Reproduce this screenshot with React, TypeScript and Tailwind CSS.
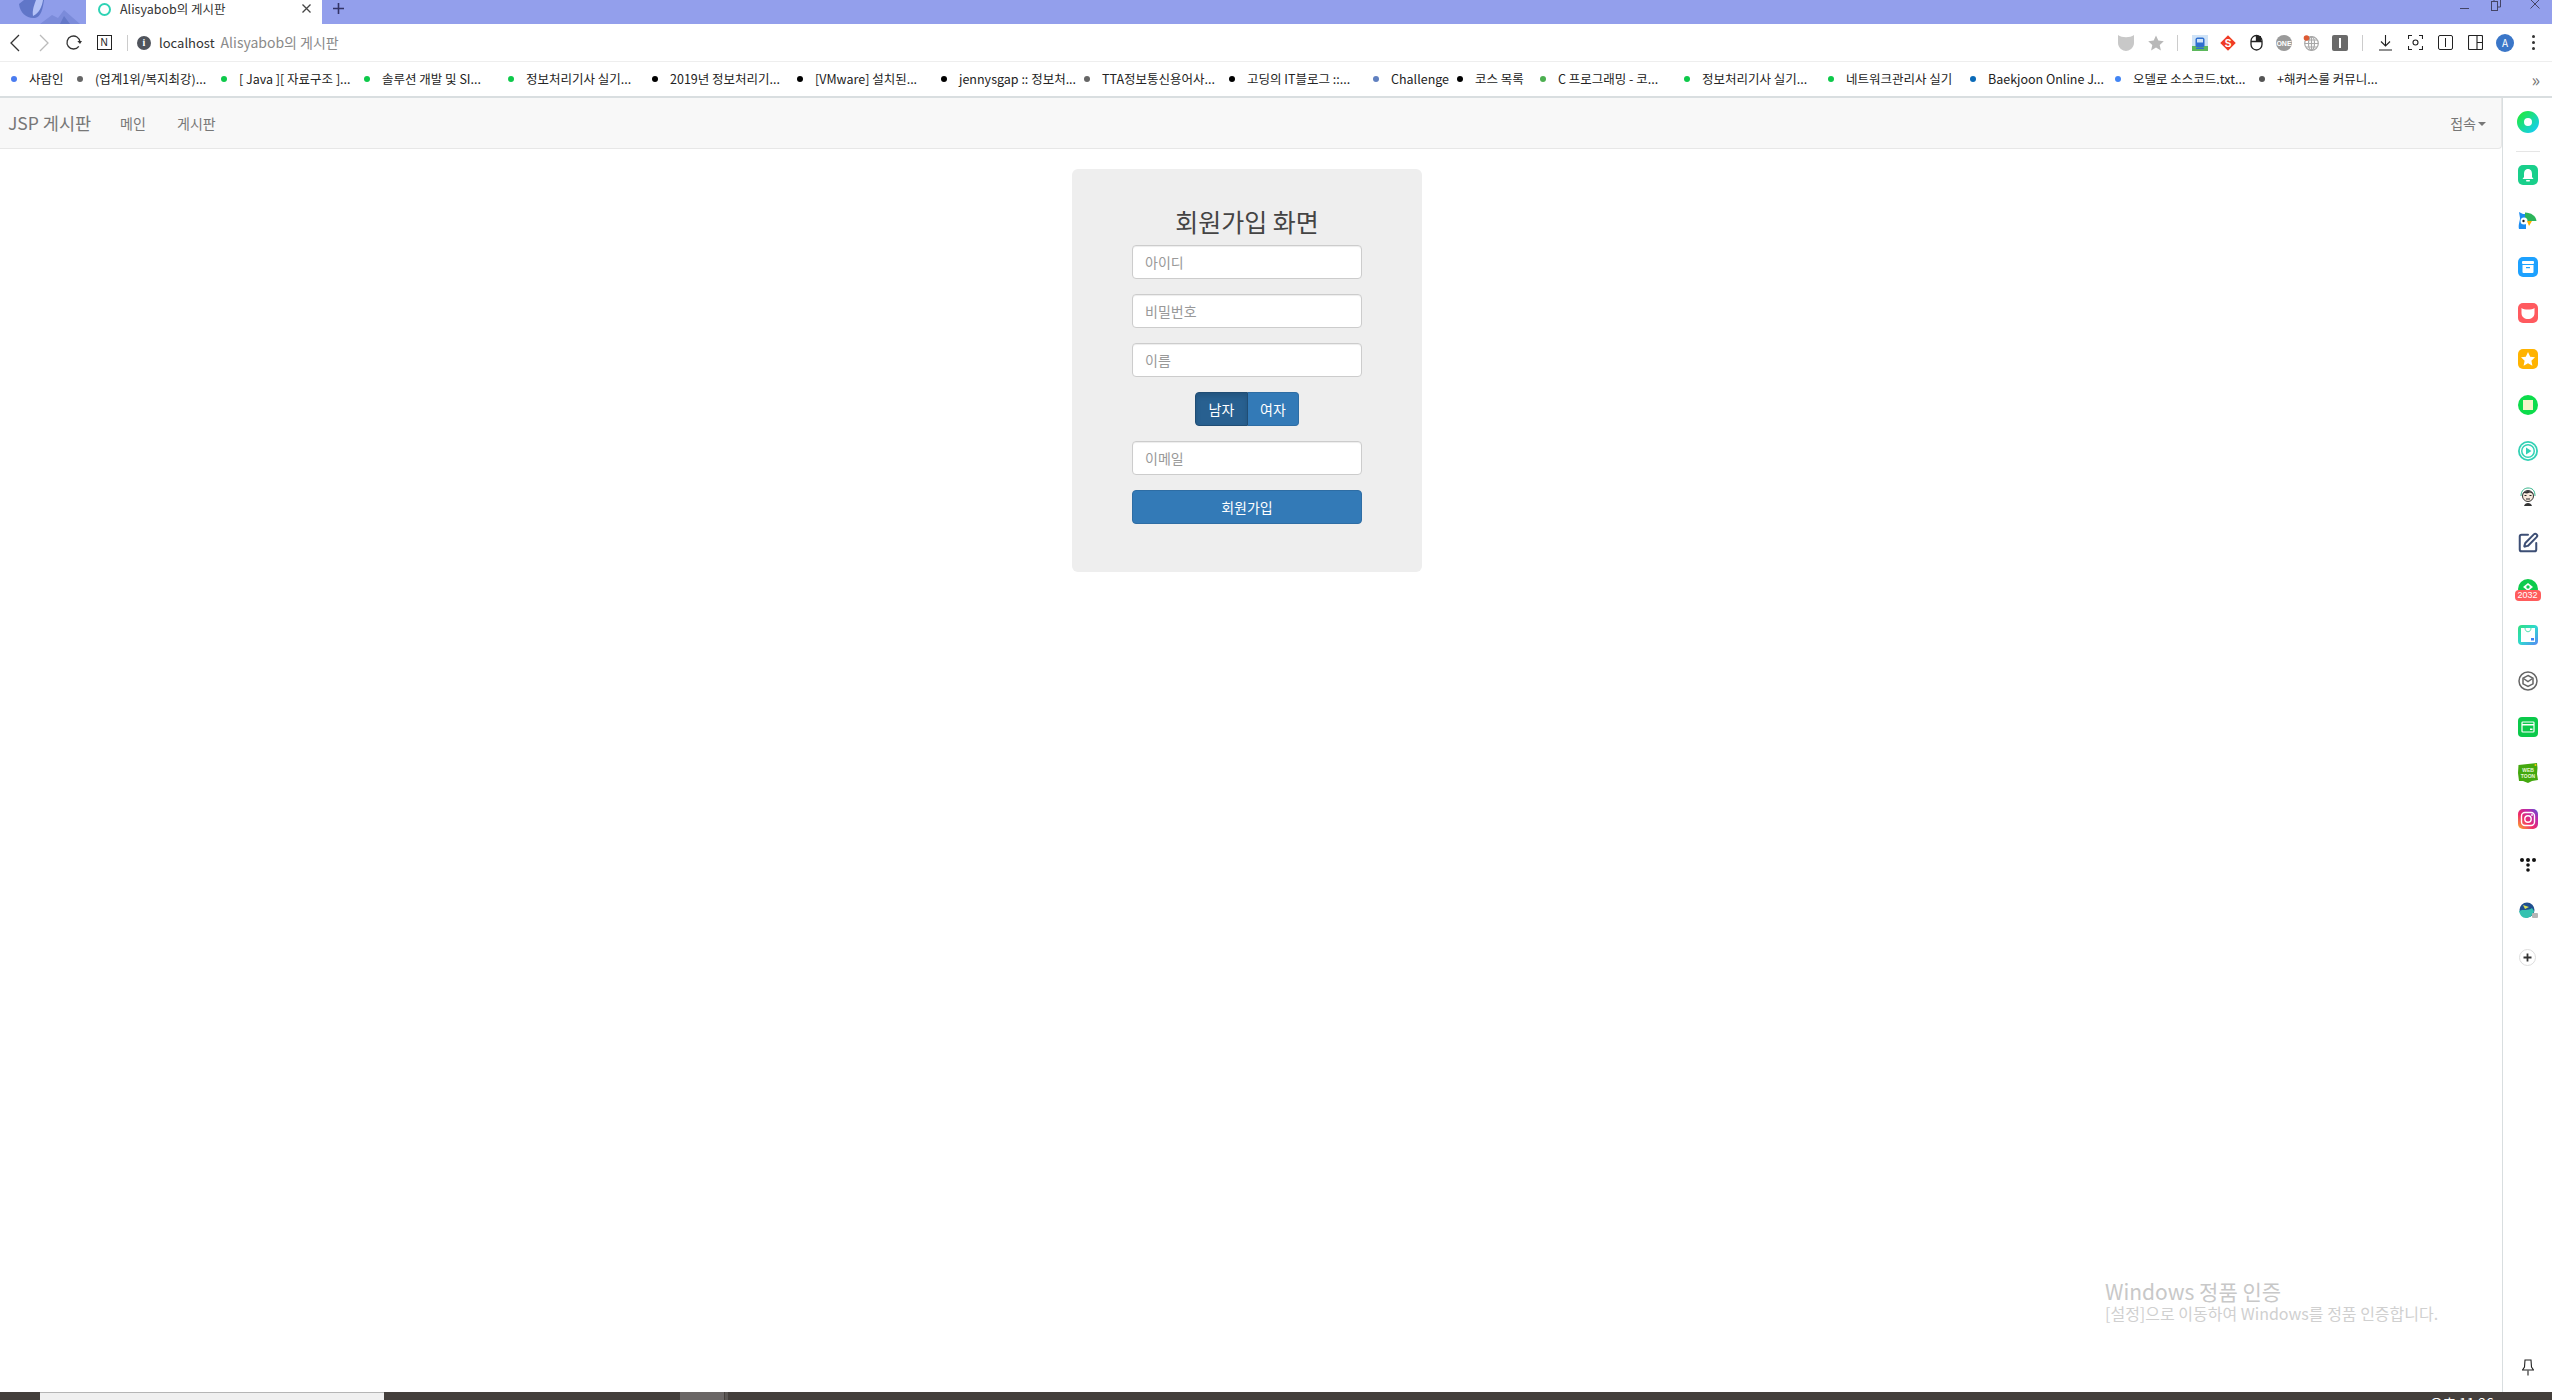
import { SquarePen } from 'lucide-react';

const bookmarks = [
  { label: '사람인', dot: 'bg-[#4a7cf0]', width: 'w-[66px]' },
  { label: '(업계1위/복지최강)...', dot: 'bg-[#666666]', width: 'w-[144px]' },
  { label: '[ Java ][ 자료구조 ]...', dot: 'bg-[#0dc94a]', width: 'w-[143px]' },
  { label: '솔루션 개발 및 SI...', dot: 'bg-[#0dc94a]', width: 'w-[144px]' },
  { label: '정보처리기사 실기...', dot: 'bg-[#0dc94a]', width: 'w-[144px]' },
  { label: '2019년 정보처리기...', dot: 'bg-black', width: 'w-[145px]' },
  { label: '[VMware] 설치된...', dot: 'bg-black', width: 'w-[144px]' },
  { label: 'jennysgap :: 정보처...', dot: 'bg-black', width: 'w-[143px]' },
  { label: 'TTA정보통신용어사...', dot: 'bg-[#666666]', width: 'w-[145px]' },
  { label: '고딩의 IT블로그 ::...', dot: 'bg-black', width: 'w-[144px]' },
  { label: 'Challenge', dot: 'bg-[#6080c0]', width: 'w-[84px]' },
  { label: '코스 목록', dot: 'bg-black', width: 'w-[83px]' },
  { label: 'C 프로그래밍 - 코...', dot: 'bg-[#4caf50]', width: 'w-[144px]' },
  { label: '정보처리기사 실기...', dot: 'bg-[#0dc94a]', width: 'w-[144px]' },
  { label: '네트워크관리사 실기', dot: 'bg-[#0dc94a]', width: 'w-[142px]' },
  { label: 'Baekjoon Online J...', dot: 'bg-[#0a6ab8]', width: 'w-[145px]' },
  { label: '오델로 소스코드.txt...', dot: 'bg-[#4285f4]', width: 'w-[144px]' },
  { label: '+해커스룰 커뮤니...', dot: 'bg-[#555555]', width: 'w-[144px]' },
];

function TabArt() {
  return (
    <svg width="86" height="24" viewBox="0 0 86 24" className="shrink-0">
      <rect width="86" height="24" fill="#8f9dea" />
      <path d="M40 24 L52 15 L58 18 L64 10 L80 24 Z" fill="#7b8bda" />
      <path d="M60 24 L64 16 L70 24 Z" fill="#6478c8" />
      <path d="M19 4 C20 13 27 19 35 18 C41 17 43 8 44 0 L24 0 Z" fill="#6076c8" />
      <path d="M33 16 C39 13 42 7 43 0 L36 0 C34 5 32 11 33 16 Z" fill="#b4c2f6" />
    </svg>
  );
}

function SidebarIcons() {
  return (
    <>
      <div className="h-[46px] flex items-center justify-center">
        <svg width="20" height="20" viewBox="0 0 20 20">
          <rect width="20" height="20" rx="5" fill="#19cf8b" />
          <path d="M10 4 C7 4 6 6.500 6 9 L6 12 L4.500 14 L15.500 14 L14 12 L14 9 C14 6.500 13 4 10 4 Z" fill="#fff" />
          <rect x="8" y="15" width="4" height="1.500" rx="0.700" fill="#fff" />
        </svg>
      </div>
      <div className="h-[46px] flex items-center justify-center">
        <svg width="20" height="20" viewBox="0 0 20 20">
          <path d="M1 1 L5 3 L8 3 L8 18 L1 18 C0 14 2 10 2 7 Z" fill="#1b8cf2" />
          <path d="M7 1.500 C13 1.500 18 5 18.500 10 L9 10 L7 6 Z" fill="#2bb45a" />
          <circle cx="6" cy="10" r="3.500" fill="#fff" />
          <circle cx="5.500" cy="10" r="1.200" fill="#222" />
          <path d="M9 10 L14 10 L11 15 Z" fill="#ffb300" />
        </svg>
      </div>
      <div className="h-[46px] flex items-center justify-center">
        <svg width="20" height="20" viewBox="0 0 20 20">
          <rect width="20" height="20" rx="5" fill="#1da1ff" />
          <rect x="4" y="4" width="12" height="3" rx="1" fill="#fff" />
          <path d="M4.500 8 H15.500 V15 A1 1 0 0 1 14.500 16 H5.500 A1 1 0 0 1 4.500 15 Z" fill="#fff" />
          <rect x="8" y="10" width="4" height="1.200" fill="#1da1ff" />
        </svg>
      </div>
      <div className="h-[46px] flex items-center justify-center">
        <svg width="20" height="20" viewBox="0 0 20 20">
          <rect width="20" height="20" rx="5" fill="#ff5a5f" />
          <path d="M3.500 5 C6 7 14 7 16.500 5 L16.500 10 C16.500 18 3.500 18 3.500 10 Z" fill="#fff" />
        </svg>
      </div>
      <div className="h-[46px] flex items-center justify-center">
        <svg width="20" height="20" viewBox="0 0 20 20">
          <rect width="20" height="20" rx="5" fill="#ffb300" />
          <path d="M10 3 L12.200 7.700 L17 8.300 L13.400 11.700 L14.400 16.700 L10 14.200 L5.600 16.700 L6.600 11.700 L3 8.300 L7.800 7.700 Z" fill="#fff" />
        </svg>
      </div>
      <div className="h-[46px] flex items-center justify-center">
        <svg width="20" height="20" viewBox="0 0 20 20">
          <circle cx="10" cy="10" r="10" fill="#0ddc4b" />
          <rect x="5" y="5" width="10" height="10" fill="#f4f4c8" />
        </svg>
      </div>
      <div className="h-[46px] flex items-center justify-center">
        <svg width="20" height="20" viewBox="0 0 20 20">
          <circle cx="10" cy="10" r="10" fill="#32d1b4" />
          <circle cx="10" cy="10" r="8.200" fill="#fff" />
          <circle cx="10" cy="10" r="7" fill="#32d1b4" />
          <circle cx="10" cy="10" r="5.500" fill="#fff" />
          <path d="M8 6.500 L13.500 10 L8 13.500 Z" fill="#32d1b4" />
        </svg>
      </div>
      <div className="h-[46px] flex items-center justify-center">
        <svg width="18" height="20" viewBox="0 0 18 20">
          <path d="M2 9 C2 3 6 1 9 1 C13 1 16 3 16 9" fill="none" stroke="#37b58c" strokeWidth="1" />
          <circle cx="9" cy="9" r="5.500" fill="#f7e9dc" stroke="#333" strokeWidth="1" />
          <path d="M3.500 7 C5 3 13 3 14.500 7 L11 5.500 L8 6.500 L5 6 Z" fill="#333" />
          <rect x="5.500" y="8" width="2" height="1" fill="#222" />
          <rect x="10.500" y="8" width="2" height="1" fill="#222" />
          <path d="M7 12 H11" stroke="#222" strokeWidth="1" />
          <path d="M5 19 C6 15 12 15 13 19 Z" fill="#333" />
        </svg>
      </div>
      <div className="h-[46px] flex items-center justify-center">
        <SquarePen size={22} strokeWidth={2.200} color="#3d4f75" />
      </div>
      <div className="h-[46px] flex items-center justify-center">
        <div className="relative w-[26px] h-[24px] mt-1 flex justify-center">
          <svg width="20" height="18" viewBox="0 0 20 18">
            <circle cx="10" cy="10" r="10" fill="#0dcb4c" />
            <path d="M10 4 L15 8 L10 12 L5 8 Z" fill="#fff" />
            <circle cx="10" cy="8" r="1.700" fill="#0dcb4c" />
          </svg>
          <span className="absolute left-0 top-[11px] w-[26px] h-[11px] rounded-[4px] bg-[#ff5c5c] text-white text-[9px] leading-[11px] text-center font-['Liberation_Sans',sans-serif]">2032</span>
        </div>
      </div>
      <div className="h-[46px] flex items-center justify-center">
        <svg width="20" height="20" viewBox="0 0 20 20">
          <defs>
            <linearGradient id="bagBg" x1="0" y1="0" x2="1" y2="1">
              <stop offset="0" stopColor="#2fe07c" />
              <stop offset="0.500" stopColor="#2fd8d0" />
              <stop offset="1" stopColor="#5a86f5" />
            </linearGradient>
          </defs>
          <rect width="20" height="20" rx="4" fill="url(#bagBg)" />
          <rect x="3" y="3" width="14" height="14" fill="#fff" />
          <path d="M7 3 C7 8 13 8 13 3" fill="none" stroke="#2fd8a0" strokeWidth="0.800" />
          <rect x="13" y="13" width="3" height="2.500" fill="#3b82f6" />
        </svg>
      </div>
      <div className="h-[46px] flex items-center justify-center">
        <svg width="20" height="20" viewBox="0 0 20 20" fill="none" stroke="#666" strokeWidth="1.500">
          <circle cx="10" cy="10" r="9" />
          <path d="M10 4.500 L15 7.200 L15 12.800 L10 15.500 L5 12.800 L5 7.200 Z" />
          <path d="M5.500 7.500 L10 10.500 L14.500 7.500" />
        </svg>
      </div>
      <div className="h-[46px] flex items-center justify-center">
        <svg width="20" height="20" viewBox="0 0 20 20">
          <rect width="20" height="20" rx="4" fill="#0ac94a" />
          <rect x="4" y="5" width="12" height="10" rx="0.800" fill="none" stroke="#fff" strokeWidth="1.200" />
          <rect x="4" y="7" width="12" height="1.500" fill="#fff" />
          <rect x="12" y="11.500" width="2.500" height="1.500" fill="#fff" />
        </svg>
      </div>
      <div className="h-[46px] flex items-center justify-center">
        <svg width="20" height="20" viewBox="0 0 20 20">
          <path d="M0.500 2 L19 0 L19.500 5 L19 11 L20 17 L14 18 L10 20 L5 18 L1 18 L0 10 Z" fill="#43a80e" />
          <circle cx="17.500" cy="2" r="1" fill="#ffc400" />
          <text x="10" y="9" textAnchor="middle" fontSize="5" fontWeight="700" fill="#e9f7dc" fontFamily="Liberation Sans, sans-serif">WEB</text>
          <text x="10" y="15" textAnchor="middle" fontSize="5" fontWeight="700" fill="#e9f7dc" fontFamily="Liberation Sans, sans-serif">TOON</text>
        </svg>
      </div>
      <div className="h-[46px] flex items-center justify-center">
        <svg width="20" height="20" viewBox="0 0 20 20">
          <defs>
            <linearGradient id="instaBg" x1="0" y1="1" x2="1" y2="0">
              <stop offset="0" stopColor="#fdb22c" />
              <stop offset="0.400" stopColor="#ee2a6b" />
              <stop offset="0.750" stopColor="#b42bb0" />
              <stop offset="1" stopColor="#4f5bd5" />
            </linearGradient>
          </defs>
          <rect width="20" height="20" rx="5" fill="url(#instaBg)" />
          <rect x="3.500" y="3.500" width="13" height="13" rx="3.500" fill="none" stroke="#fff" strokeWidth="1.400" />
          <circle cx="10" cy="10" r="3.200" fill="none" stroke="#fff" strokeWidth="1.400" />
          <circle cx="14" cy="6" r="0.900" fill="#fff" />
        </svg>
      </div>
      <div className="h-[46px] flex items-center justify-center">
        <svg width="16" height="14" viewBox="0 0 16 14" fill="#111">
          <circle cx="2" cy="2" r="2" />
          <circle cx="8" cy="2" r="2" />
          <circle cx="14" cy="2" r="2" />
          <circle cx="8" cy="7" r="1.800" />
          <circle cx="8" cy="12" r="1.800" />
        </svg>
      </div>
      <div className="h-[46px] flex items-center justify-center">
        <svg width="20" height="18" viewBox="0 0 20 18">
          <circle cx="9" cy="8" r="7.500" fill="#1f4f8f" />
          <path d="M1 9 C5 7 10 9 14 6 L16 9 C15 14 11 16 8 16 C4 16 2 13 1 9 Z" fill="#35c2b0" />
          <path d="M5 3 L11 5 L7 7 Z" fill="#d8e25a" />
          <rect x="14" y="11" width="6" height="5" rx="1" fill="#b5b5b5" />
        </svg>
      </div>
      <div className="h-[46px] flex items-center justify-center">
        <div className="w-[17px] h-[17px] rounded-full border border-[#dddddd] flex items-center justify-center">
          <svg width="9" height="9" viewBox="0 0 9 9">
            <path d="M4.500 0.500 V8.500 M0.500 4.500 H8.500" stroke="#333" strokeWidth="1.800" />
          </svg>
        </div>
      </div>
    </>
  );
}

export default function App() {
  return (
    <div className="h-screen w-full overflow-hidden bg-white flex flex-col font-['Noto_Sans_CJK_KR',sans-serif] text-black">
      {/* Tab strip */}
      <div className="h-6 shrink-0 bg-[#939fec] flex items-stretch">
        <TabArt />
        <div className="w-[236px] bg-white flex items-center pl-3 pb-[6px] relative">
          <span className="w-[13px] h-[13px] rounded-full border-2 border-[#2fd3b5]"></span>
          <span className="ml-[9px] text-[12.500px] leading-[18px] text-[#333333]">Alisyabob의 게시판</span>
          <svg width="9" height="9" viewBox="0 0 9 9" stroke="#444444" strokeWidth="1.300" className="absolute left-[216px] top-[4px]">
            <path d="M0.500 0.500 L8.500 8.500 M8.500 0.500 L0.500 8.500" />
          </svg>
        </div>
        <svg width="11" height="11" viewBox="0 0 11 11" stroke="#333366" strokeWidth="1.600" className="ml-[11px] mt-[3px]">
          <path d="M5.500 0 V11 M0 5.500 H11" />
        </svg>
        <div className="ml-auto flex items-center pr-[12px]">
          <span className="w-[9px] h-px bg-[#444466] -mt-2"></span>
          <svg width="12" height="14" viewBox="0 0 12 14" fill="none" stroke="#444466" className="ml-[21px] -mt-4">
            <rect x="1.500" y="4.500" width="6" height="9" />
            <path d="M4 4 V1.500 H10.500 V10 H8" />
          </svg>
          <svg width="10" height="10" viewBox="0 0 10 10" stroke="#444466" className="ml-[28px] -mt-4">
            <path d="M0.500 0.500 L9.500 9.500 M9.500 0.500 L0.500 9.500" />
          </svg>
        </div>
      </div>

      {/* Address bar */}
      <div className="h-[38px] shrink-0 bg-white border-b border-[#eeeeee] flex items-center">
        <div className="w-[29px] flex justify-center">
          <svg width="12" height="18" viewBox="0 0 12 18" fill="none" stroke="#333" strokeWidth="1.300"><path d="M10 1 L2 9 L10 17" /></svg>
        </div>
        <div className="w-[30px] flex justify-center">
          <svg width="12" height="18" viewBox="0 0 12 18" fill="none" stroke="#bbbbbb" strokeWidth="1.300"><path d="M2 1 L10 9 L2 17" /></svg>
        </div>
        <div className="w-[29px] flex justify-center">
          <svg width="17" height="17" viewBox="0 0 17 17" fill="none" stroke="#333" strokeWidth="1.300">
            <path d="M13.800 12.300 A6.500 6.500 0 1 1 15 8" />
            <path d="M12.300 7 L17 7 L15 10 Z" fill="#333" stroke="none" />
          </svg>
        </div>
        <div className="w-[32px] flex justify-center">
          <span className="w-[15px] h-[15px] border border-[#222222] text-[10px] leading-[13px] text-center text-[#222222] font-['Liberation_Sans',sans-serif]">N</span>
        </div>
        <div className="w-[14px] flex justify-center"><span className="w-px h-[16px] bg-[#cccccc]"></span></div>
        <div className="w-[20px] flex justify-center">
          <span className="w-[14px] h-[14px] rounded-full bg-[#50545c] text-white text-[10px] leading-[14px] text-center font-bold font-['Liberation_Serif',serif]">i</span>
        </div>
        <span className="ml-[5px] text-[13px] text-[#333333]">localhost</span>
        <span className="ml-[6px] text-[14px] text-[#8a8a8a]">Alisyabob의 게시판</span>

        <div className="ml-auto flex items-center pr-[5px]">
          <div className="w-[30px] flex justify-center">
            <svg width="16" height="16" viewBox="0 0 16 16"><path d="M0 0 C4 3 12 3 16 0 L16 8 C16 13 11 16 8 16 C5 16 0 13 0 8 Z" fill="#c8c8c8" /></svg>
          </div>
          <div className="w-[30px] flex justify-center">
            <svg width="16" height="16" viewBox="0 0 16 16"><path d="M8 0.500 L10.300 5.600 L15.800 6.200 L11.700 9.900 L12.900 15.400 L8 12.600 L3.100 15.400 L4.300 9.900 L0.200 6.200 L5.700 5.600 Z" fill="#b8b8b8" /></svg>
          </div>
          <div className="w-[12px] flex justify-center"><span className="w-px h-[16px] bg-[#cccccc]"></span></div>
          <div className="w-[34px] flex justify-center">
            <svg width="16" height="16" viewBox="0 0 16 16">
              <rect width="16" height="16" fill="#cfe3f7" />
              <rect y="11" width="16" height="5" fill="#5cb85c" />
              <rect x="3.500" y="2.500" width="9" height="10" rx="2" fill="#2f6fd0" />
              <rect x="5" y="4" width="6" height="3.500" fill="#cfe3f7" />
              <rect x="4" y="13" width="8" height="1" fill="#2f6fd0" />
            </svg>
          </div>
          <div className="w-[22px] flex justify-center">
            <svg width="16" height="16" viewBox="0 0 16 16">
              <rect x="2.500" y="2.500" width="11" height="11" transform="rotate(45 8 8)" fill="#f03a24" />
              <text x="8" y="11.500" textAnchor="middle" fontSize="10" fontWeight="700" fill="#fff" fontFamily="Liberation Sans, sans-serif">S</text>
            </svg>
          </div>
          <div className="w-[34px] flex justify-center">
            <svg width="13" height="17" viewBox="0 0 13 17" fill="none" stroke="#222" strokeWidth="1.300">
              <rect x="1" y="1.500" width="11" height="14.500" rx="5.500" />
              <path d="M1 7.500 H12 M6.500 1.500 V7.500" />
              <rect x="6.500" y="2" width="4.500" height="5.500" fill="#222" stroke="none" />
            </svg>
          </div>
          <div className="w-[22px] flex justify-center">
            <svg width="16" height="16" viewBox="0 0 16 16">
              <circle cx="8" cy="8" r="8" fill="#9a9a9a" />
              <text x="8" y="10.500" textAnchor="middle" fontSize="7" fontWeight="700" fill="#fff" fontFamily="Liberation Sans, sans-serif">ONE</text>
            </svg>
          </div>
          <div className="w-[32px] flex justify-center">
            <svg width="16" height="16" viewBox="0 0 16 16" fill="none" stroke="#a8a8a8" strokeWidth="1.200">
              <circle cx="8.500" cy="8.500" r="6.800" />
              <path d="M8.500 1.700 V15.300 M1.700 8.500 H15.300 M3 5 H14 M3 12 H14" />
              <ellipse cx="8.500" cy="8.500" rx="3" ry="6.800" />
              <circle cx="3.500" cy="3" r="2.800" fill="#dd5a33" stroke="none" />
            </svg>
          </div>
          <div className="w-[26px] flex justify-center">
            <span className="w-[16px] h-[16px] rounded-[2px] bg-[#6a6a6a] flex items-center justify-center"><span className="w-[2px] h-[10px] bg-white"></span></span>
          </div>
          <div className="w-[18px] flex justify-center"><span className="w-px h-[16px] bg-[#cccccc]"></span></div>
          <div className="w-[28px] flex justify-center">
            <svg width="13" height="16" viewBox="0 0 13 16" fill="none" stroke="#222" strokeWidth="1.100">
              <path d="M6.500 0 V11 M2 6.500 L6.500 11 L11 6.500 M0 15 H13" />
            </svg>
          </div>
          <div className="w-[32px] flex justify-center">
            <svg width="15" height="15" viewBox="0 0 15 15" fill="none" stroke="#222" strokeWidth="1.100">
              <path d="M0.500 4 V0.500 H4 M11 0.500 H14.500 V4 M14.500 11 V14.500 H11 M4 14.500 H0.500 V11" />
              <circle cx="7.500" cy="7.500" r="2.500" />
            </svg>
          </div>
          <div className="w-[28px] flex justify-center">
            <span className="w-[15px] h-[15px] rounded-[2px] border border-[#222222] flex items-center justify-center"><span className="w-px h-[9px] bg-[#222222]"></span></span>
          </div>
          <div className="w-[32px] flex justify-center">
            <svg width="15" height="15" viewBox="0 0 15 15" fill="none" stroke="#222" strokeWidth="1.100">
              <rect x="0.500" y="0.500" width="14" height="14" rx="1" />
              <path d="M9 0.500 V14.500 M9 7.500 H14.500" />
            </svg>
          </div>
          <div className="w-[28px] flex justify-center">
            <span className="w-[18px] h-[18px] rounded-full bg-[#3a76c8] text-white text-[10px] leading-[18px] text-center">A</span>
          </div>
          <div className="w-[28px] flex flex-col items-center gap-[3px]">
            <span className="w-[3px] h-[3px] rounded-full bg-[#333333]"></span>
            <span className="w-[3px] h-[3px] rounded-full bg-[#333333]"></span>
            <span className="w-[3px] h-[3px] rounded-full bg-[#333333]"></span>
          </div>
        </div>
      </div>

      {/* Bookmarks */}
      <div className="h-[36px] shrink-0 bg-white border-b-2 border-[#d9dee0] flex items-center pl-[11px]">
        {bookmarks.map((b, i) => (
          <div key={i} className={`${b.width} shrink-0 flex items-center gap-3`}>
            <span className={`${b.dot} w-1.5 h-1.5 rounded-full shrink-0`}></span>
            <span className="text-[12.500px] text-[#222222] whitespace-nowrap">{b.label}</span>
          </div>
        ))}
        <span className="ml-auto pr-3 text-[18px] leading-4 text-[#777777]">»</span>
      </div>

      {/* Page + side panel */}
      <div className="flex-1 min-h-0 flex">
        <main className="flex-1 min-w-0 relative bg-white">
          <nav className="h-[51px] bg-[#f8f8f8] border-b border-r border-[#e7e7e7] rounded-br-[4px] flex items-center pl-2 pr-[15px] text-[#777777]">
            <span className="text-[17.500px] w-[112px]">JSP 게시판</span>
            <span className="text-sm w-[57px]">메인</span>
            <span className="text-sm">게시판</span>
            <span className="ml-auto text-sm">접속</span>
            <span className="ml-[2px] mt-[2px] w-0 h-0 border-x-4 border-x-transparent border-t-4 border-t-[#777777]"></span>
          </nav>

          <div className="flex justify-center pr-2 pt-5">
            <form className="w-[350px] bg-[#eeeeee] rounded-md pt-[39px] pb-12 px-[60px] flex flex-col">
              <h3 className="text-[25px] leading-[26px] text-center text-[#444444] mb-[11px] whitespace-nowrap">회원가입 화면</h3>
              <input placeholder="아이디" className="h-[34px] mb-[15px] px-3 bg-white border border-[#cccccc] rounded text-sm placeholder:text-[#999999] shadow-[inset_0_1px_1px_rgba(0,0,0,0.075)]" />
              <input placeholder="비밀번호" className="h-[34px] mb-[15px] px-3 bg-white border border-[#cccccc] rounded text-sm placeholder:text-[#999999] shadow-[inset_0_1px_1px_rgba(0,0,0,0.075)]" />
              <input placeholder="이름" className="h-[34px] mb-[15px] px-3 bg-white border border-[#cccccc] rounded text-sm placeholder:text-[#999999] shadow-[inset_0_1px_1px_rgba(0,0,0,0.075)]" />
              <div className="flex justify-center mb-[15px]">
                <button type="button" className="w-[53px] h-[34px] bg-[#286090] border border-[#204d74] rounded-l text-sm text-white shadow-[inset_0_3px_5px_rgba(0,0,0,0.125)]">남자</button>
                <button type="button" className="w-[51px] h-[34px] bg-[#337ab7] border border-[#2e6da4] border-l-0 rounded-r text-sm text-white">여자</button>
              </div>
              <input placeholder="이메일" className="h-[34px] mb-[15px] px-3 bg-white border border-[#cccccc] rounded text-sm placeholder:text-[#999999] shadow-[inset_0_1px_1px_rgba(0,0,0,0.075)]" />
              <button type="button" className="h-[34px] bg-[#337ab7] border border-[#2e6da4] rounded text-sm text-white">회원가입</button>
            </form>
          </div>

          {/* Activation watermark */}
          <div className="absolute left-[2105px] top-[1180px] text-[#c8c8c8] whitespace-nowrap">
            <p className="text-[21px] leading-[26px]">Windows 정품 인증</p>
            <p className="text-[16px] leading-[18px] text-[#d0d0d0]">[설정]으로 이동하여 Windows를 정품 인증합니다.</p>
          </div>
        </main>

        <aside className="w-[50px] shrink-0 border-l border-[#d9dee0] bg-white flex flex-col items-center">
          <div className="h-[50px] shrink-0 pt-[13px]">
            <svg width="22" height="22" viewBox="0 0 22 22">
              <defs>
                <linearGradient id="ringBg" x1="0" y1="0" x2="1" y2="1">
                  <stop offset="0" stopColor="#1fe84a" />
                  <stop offset="1" stopColor="#17cfe8" />
                </linearGradient>
              </defs>
              <circle cx="11" cy="11" r="7.500" fill="none" stroke="url(#ringBg)" strokeWidth="7" />
            </svg>
          </div>
          <span className="w-6 h-px bg-[#e5e5e5] mt-[3px]"></span>
          <SidebarIcons />
          <div className="mt-auto mb-4">
            <svg width="12" height="17" viewBox="0 0 12 17" fill="none" stroke="#222" strokeWidth="1.100">
              <path d="M3 1 H9 L9.500 8 L11.500 11 H0.500 L2.500 8 Z" />
              <path d="M6 11 V16.500" strokeWidth="1.600" stroke="#666" />
            </svg>
          </div>
        </aside>
      </div>

      {/* Taskbar, cut off at the bottom edge of the capture */}
      <div className="h-2 shrink-0 overflow-hidden bg-[#443f3c] flex items-start relative">
        <span className="ml-[40px] w-[344px] h-2 bg-[#f0f0f0] border-t border-[#b5b5b5]"></span>
        <span className="ml-[296px] w-[44px] h-2 bg-[#6b6766]"></span>
        <span className="ml-[1px] w-[3px] h-2 bg-[#5a5654]"></span>
        <span className="absolute left-[2430px] top-[2px] text-[14px] leading-[18px] text-white whitespace-nowrap">오후 11:26</span>
      </div>
    </div>
  );
}
